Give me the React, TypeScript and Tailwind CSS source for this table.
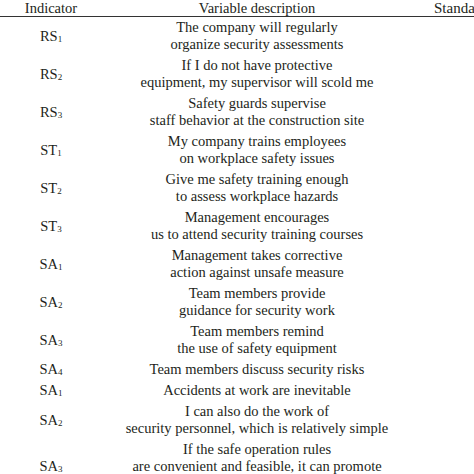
import React from 'react';

type Row = { code: string; sub: string; lines: string[] };

const rows: Row[] = [
  { code: 'RS', sub: '1', lines: ['The company will regularly', 'organize security assessments'] },
  { code: 'RS', sub: '2', lines: ['If I do not have protective', 'equipment, my supervisor will scold me'] },
  { code: 'RS', sub: '3', lines: ['Safety guards supervise', 'staff behavior at the construction site'] },
  { code: 'ST', sub: '1', lines: ['My company trains employees', 'on workplace safety issues'] },
  { code: 'ST', sub: '2', lines: ['Give me safety training enough', 'to assess workplace hazards'] },
  { code: 'ST', sub: '3', lines: ['Management encourages', 'us to attend security training courses'] },
  { code: 'SA', sub: '1', lines: ['Management takes corrective', 'action against unsafe measure'] },
  { code: 'SA', sub: '2', lines: ['Team members provide', 'guidance for security work'] },
  { code: 'SA', sub: '3', lines: ['Team members remind', 'the use of safety equipment'] },
  { code: 'SA', sub: '4', lines: ['Team members discuss security risks'] },
  { code: 'SA', sub: '1', lines: ['Accidents at work are inevitable'] },
  { code: 'SA', sub: '2', lines: ['I can also do the work of', 'security personnel, which is relatively simple'] },
  { code: 'SA', sub: '3', lines: ['If the safe operation rules', 'are convenient and feasible, it can promote', 'safe behavior'] },
];

const Code = ({ code, sub }: { code: string; sub: string }) => (
  <span>
    {code}
    <sub className="text-[9px] relative top-[1px]">{sub}</sub>
  </span>
);

export default function App() {
  return (
    <div
      className="w-[474px] h-[474px] overflow-hidden bg-white text-[#231f20] text-[14.5px] leading-[17px]"
      style={{ fontFamily: '"Liberation Serif", "Times New Roman", serif' }}
    >
      <div className="w-[700px]">
        {/* header */}
        <div className="flex h-[17px] items-center border-b-[1.5px] border-[#333]">
          <div className="w-[102px] shrink-0 text-center">Indicator</div>
          <div className="w-[310px] shrink-0 text-center">Variable description</div>
          <div className="shrink-0 pl-[22px] text-[15px] whitespace-nowrap">Standard deviation</div>
        </div>

        {rows.map((r, i) => (
          <div key={i} className="flex items-center py-[2px]">
            <div className="w-[102px] shrink-0 text-center">
              <Code code={r.code} sub={r.sub} />
            </div>
            <div className="w-[310px] shrink-0 text-center whitespace-nowrap">
              {r.lines.map((l, j) => (
                <div key={j}>{l}</div>
              ))}
            </div>
          </div>
        ))}
      </div>
    </div>
  );
}
